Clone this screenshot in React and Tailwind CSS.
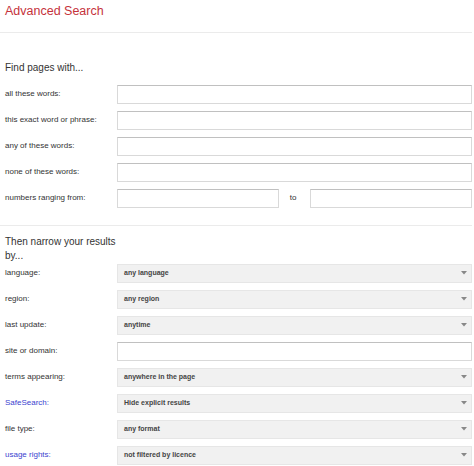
const findRows = [
  "all these words:",
  "this exact word or phrase:",
  "any of these words:",
  "none of these words:",
];

const narrowRows = [
  { label: "language:", select: "any language" },
  { label: "region:", select: "any region" },
  { label: "last update:", select: "anytime" },
  { label: "site or domain:" },
  { label: "terms appearing:", select: "anywhere in the page" },
  { label: "SafeSearch:", select: "Hide explicit results", link: true },
  { label: "file type:", select: "any format" },
  { label: "usage rights:", select: "not filtered by licence", link: true },
];

const TextBox = ({ className = "" }) => (
  <div className={`h-[19px] border border-[#d9d9d9] border-t-[#c0c0c0] bg-white ${className}`} />
);

const SelectBox = ({ value }) => (
  <div className="h-[19px] flex items-center justify-between bg-[#f1f1f1] border border-[#e6e6e6] pl-[6px] pr-[4px]">
    <span className="text-[7px] font-bold text-[#444]">{value}</span>
    <svg width="6" height="4" viewBox="0 0 6 4" className="shrink-0">
      <path d="M0 0 L6 0 L3 3.5 Z" fill="#888" />
    </svg>
  </div>
);

const Row = ({ label, link, children }) => (
  <div className="flex items-center h-[26px]">
    <div className={`w-[112px] shrink-0 text-[8px] ${link ? "text-[#3b3fcf]" : "text-[#333]"}`}>
      {label}
    </div>
    <div className="flex-1">{children}</div>
  </div>
);

export default function App() {
  return (
    <div
      className="w-[474px] h-[466px] overflow-hidden bg-white pl-[5px] pr-[2px]"
      style={{ fontFamily: '"Liberation Sans", Arial, sans-serif' }}
    >
      <div className="h-[33px] border-b border-[#ebebeb] -ml-[5px] pl-[5px] pt-[2px]">
        <h1 className="text-[12.5px] text-[#c5323b] leading-[18px]">Advanced Search</h1>
      </div>

      <div className="pt-[27px] pb-[2px] text-[10px] text-[#333] leading-[16px]">Find pages with...</div>

      <div className="mt-[3px]">
        {findRows.map((label) => (
          <Row key={label} label={label}>
            <TextBox />
          </Row>
        ))}
        <Row label="numbers ranging from:">
          <div className="flex items-center">
            <TextBox className="w-[162px]" />
            <span className="w-[31px] pr-[3px] text-center text-[8px] text-[#333]">to</span>
            <TextBox className="flex-1" />
          </div>
        </Row>
      </div>

      <div className="mt-[14px] border-t border-[#ebebeb] -ml-[5px]" />

      <div className="pt-[9px] w-[115px] text-[10px] text-[#333] leading-[14px]">
        Then narrow your results by...
      </div>

      <div className="-mt-[3px]">
        {narrowRows.map((r) => (
          <Row key={r.label} label={r.label} link={r.link}>
            {r.select ? <SelectBox value={r.select} /> : <TextBox />}
          </Row>
        ))}
      </div>
    </div>
  );
}
